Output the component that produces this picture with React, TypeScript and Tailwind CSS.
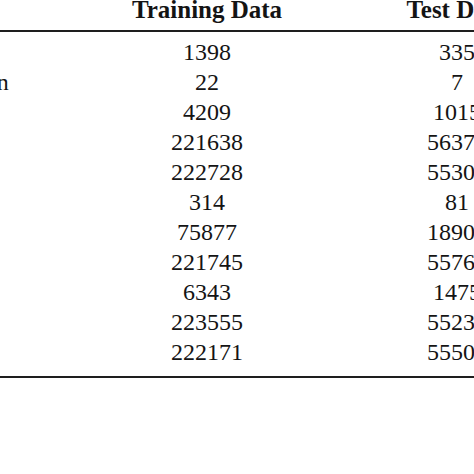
const rows: [string, string, string][] = [
  ["Backdoor", "1398", "335"],
  ["SQL Injection", "22", "7"],
  ["Uploading", "4209", "1015"],
  ["DDoS UDP", "221638", "56370"],
  ["DDoS TCP", "222728", "55300"],
  ["XSS", "314", "81"],
  ["Password", "75877", "18900"],
  ["DoS UDP", "221745", "55760"],
  ["Fingerprint", "6343", "1475"],
  ["DoS TCP", "223555", "55230"],
  ["Normal", "222171", "55500"],
];

export default function App() {
  return (
    <div className="h-[474px] w-[474px] overflow-hidden bg-white text-[#141414] font-['Liberation_Serif',serif]">
      <div className="-ml-[127px] w-[709px]">
        <div className="grid grid-cols-[209px_250px_250px] border-b-2 border-[#1e1e1e] pt-px pb-[11px] text-[25px] font-bold leading-[18px]">
          <div>Class</div>
          <div className="text-center">Training Data</div>
          <div className="text-center">Test Data</div>
        </div>
        <div className="border-b-2 border-[#1e1e1e] pt-[5px] pb-[9px] text-[24px] leading-[30px]">
          {rows.map(([label, train, test]) => (
            <div key={label} className="grid grid-cols-[209px_250px_250px]">
              <div className="whitespace-nowrap">{label}</div>
              <div className="text-center">{train}</div>
              <div className="text-center">{test}</div>
            </div>
          ))}
        </div>
      </div>
    </div>
  );
}
